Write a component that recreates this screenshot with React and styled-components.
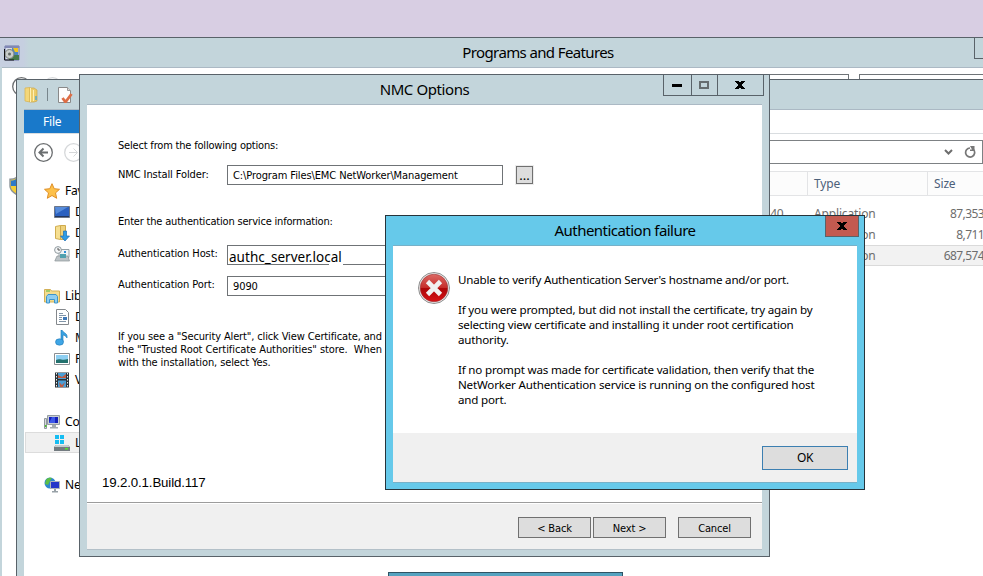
import React from "react";
import styled, { createGlobalStyle } from "styled-components";

const GlobalStyle = createGlobalStyle`
  * { box-sizing: border-box; }
  body { margin: 0; overflow: hidden; }
  svg { display: block; flex: none; }
`;

const ui = `"Segoe UI", "Noto Sans", "Open Sans", sans-serif`;
const tahoma = `Tahoma, "DejaVu Sans Condensed", "DejaVu Sans", sans-serif`;

const Desktop = styled.main`
  position: relative;
  width: 983px;
  height: 576px;
  overflow: hidden;
  background: #d8cee3;
  font: 12px/15px ${ui};
  color: #000;
`;

const Win = styled.section`
  position: absolute;
  left: ${(p) => p.$x}px;
  top: ${(p) => p.$y}px;
  width: ${(p) => p.$w}px;
  height: ${(p) => p.$h}px;
  display: flex;
  flex-direction: column;
  background: ${(p) => (p.$active ? "#66c9ea" : "#c3d5db")};
  border: 1px solid ${(p) => (p.$active ? "#27343b" : "#596269")};
  padding: 0 7px 6px;
`;

const TitleBar = styled.header`
  position: relative;
  flex: none;
  height: 29px;
  display: flex;
  align-items: center;
  justify-content: ${(p) => (p.$start ? "flex-start" : "center")};
`;

const Title = styled.h1`
  margin: 0;
  padding: 0 ${(p) => p.$shift || 0}px 2px 0;
  font: 400 15px/20px ${ui};
  letter-spacing: ${(p) => p.$ls}px;
  white-space: nowrap;
`;

const Client = styled.div`
  flex: 1;
  min-height: 0;
  display: flex;
  flex-direction: column;
  background: #fff;
  border-top: 1px solid ${(p) => (p.$active ? "#77b1c8" : "#abb9c4")};
  border-bottom: 1px solid ${(p) => (p.$active ? "#77b1c8" : "#b3c0c8")};
`;

const Captions = styled.div`
  position: absolute;
  right: ${(p) => p.$right}px;
  top: 0;
  height: 21px;
  display: flex;
  border: 1px solid #596269;
  border-top: 0;
`;

const CaptionButton = styled.button`
  width: ${(p) => p.$w}px;
  display: flex;
  align-items: center;
  justify-content: center;
  padding: 0 1px 0 0;
  border: 0;
  background: ${(p) => (p.$red ? "#c35a50" : "transparent")};
  & + & { border-left: 1px solid #596269; }
`;

/* Programs and Features */
const SystemIcon = styled.div`
  position: absolute;
  left: -2px;
  top: 0;
  width: 29px;
  height: 29px;
  padding: 7px 0 0 4px;
  background: linear-gradient(90deg, #c6cfe0 0, #c6cfe0 80%, #c3d5db);
`;

const BackNav = styled.div`
  display: flex;
  align-items: flex-start;
  padding: 6px 0 0 10px;
  height: 116px;
`;

const NavPair = styled.div`
  display: flex;
  gap: ${(p) => p.$gap}px;
  padding-top: ${(p) => p.$top}px;
`;

const SearchFields = styled.div`
  display: flex;
  gap: 10px;
  margin-left: 537px;
`;

const Field = styled.div`
  width: ${(p) => p.$w}px;
  height: 24px;
  border: 1px solid #6f7478;
`;

const ShieldSlot = styled.div`
  padding: 0 0 0 7px;
  margin-top: -7px;
`;

/* Explorer */
const QuickAccess = styled.div`
  display: flex;
  align-items: center;
  gap: 9px;
`;

const Separator = styled.i`
  width: 1px;
  height: 13px;
  background: #78868c;
`;

const Ribbon = styled.nav`
  flex: none;
  height: 24px;
  border-bottom: 1px solid #d9dde0;
`;

const FileTab = styled.div`
  width: 60px;
  height: 23px;
  background: #1979ca;
  color: #fff;
  font-size: 12px;
  line-height: 24px;
  letter-spacing: -0.2px;
  padding-left: 19px;
`;

const AddressRow = styled.div`
  flex: none;
  display: flex;
  height: 37px;
  padding: 6px 25px 0 10px;
`;

const Address = styled.div`
  flex: 1;
  height: 24px;
  margin-left: 60px;
  display: flex;
  align-items: center;
  justify-content: flex-end;
  gap: 11px;
  padding-right: 6px;
  border: 1px solid #7d8184;
`;

const Panes = styled.div`
  flex: 1;
  display: flex;
`;

const Tree = styled.div`
  width: 180px;
  padding-top: 9px;
`;

const Group = styled.div`
  margin-bottom: 21px;
`;

const TreeItem = styled.div`
  height: 21px;
  display: flex;
  align-items: center;
  gap: 5px;
  margin-left: 1px;
  padding-left: ${(p) => (p.$child ? 28 : 18)}px;
  border: 1px solid ${(p) => (p.$selected ? "#dcdcdc" : "transparent")};
  background: ${(p) => (p.$selected ? "#f0f0f0" : "transparent")};
  white-space: nowrap;
  letter-spacing: -0.2px;
`;

const Files = styled.div`
  flex: 1;
  color: #6d6d6d;
`;

const FileGrid = styled.div`
  display: grid;
  grid-template-columns: 604px 120px 56px;
  height: ${(p) => (p.$head ? 25 : 21)}px;
  line-height: ${(p) => (p.$head ? 24 : 19)}px;
  color: ${(p) => (p.$head ? "#4c607a" : "inherit")};
  background: ${(p) => (p.$head ? "#fcfcfc" : p.$selected ? "#f2f2f2" : "transparent")};
  border: solid ${(p) => (p.$head ? "#e3e4e6" : p.$selected ? "#dadada" : "transparent")};
  border-width: 1px 0;
  margin-bottom: ${(p) => (p.$head ? 7 : 0)}px;
`;

const Cell = styled.span`
  padding: 0 ${(p) => (p.$end ? 0 : 6)}px;
  text-align: ${(p) => (p.$end ? "right" : "left")};
  border-right: ${(p) => (p.$end ? 0 : 1)}px solid ${(p) => (p.$rule ? "#e3e4e6" : "transparent")};
  letter-spacing: ${(p) => (p.$end ? -0.6 : -0.15)}px;
`;

const DateCell = styled(Cell)`
  text-align: right;
  padding-right: 24px;
  letter-spacing: -0.5px;
`;

/* NMC Options */
const Form = styled.div`
  flex: 1;
  display: flex;
  flex-direction: column;
  padding: 34px 0 0 31px;
  font: 11px/14px ${tahoma};
`;

const Label = styled.label`
  width: ${(p) => (p.$wide ? "auto" : "109px")};
  flex: none;
  white-space: pre;
  letter-spacing: ${(p) => (p.$wide ? -0.19 : -0.1)}px;
`;

const FormRow = styled.div`
  display: flex;
  height: 20px;
  margin-top: ${(p) => p.$mt}px;
  line-height: ${(p) => p.$lh || 20}px;
`;

const TextBox = styled.div`
  position: relative;
  width: 276px;
  height: 20px;
  padding: ${(p) => (p.$edited ? "2px 0 0 1px" : "1px 0 0 5px")};
  border: 1px solid #6f7376;
  white-space: pre;
  font: ${(p) => (p.$edited ? `13.5px/18px ${ui}` : `11px/17px ${tahoma}`)};
  letter-spacing: ${(p) => (p.$edited ? 0.05 : -0.1)}px;
`;

/* Patch over the field's lower edge, beneath the last letters typed */
const EdgePatch = styled.i`
  position: absolute;
  left: 101px;
  bottom: -1px;
  width: 14px;
  height: 1px;
  background: #fff;
`;

const Browse = styled.button`
  width: 17px;
  height: 18px;
  margin: 1px 0 0 13px;
  padding: 0;
  border: 1px solid #707070;
  outline: 1px solid #ececec;
  background: #dddddd;
  font: 13px/14px ${ui};
`;

const Note = styled.p`
  margin: 34px 0 0;
  line-height: 13px;
`;

const NoteLine = styled.span`
  display: block;
  white-space: pre;
  letter-spacing: ${(p) => p.$ls}px;
`;

const Version = styled.div`
  margin: auto 0 11px -16px;
  font: 13.3px/16px "Liberation Sans", Arial, sans-serif;
  letter-spacing: -0.15px;
`;

const WizardFooter = styled.footer`
  flex: none;
  display: flex;
  height: 47px;
  padding: 14px 0 0 431px;
  background: #f0f0f0;
  border-top: 1px solid #9c9c9c;
  box-shadow: inset 0 1px #fff;
`;

const WizardButton = styled.button`
  width: 73px;
  height: 21px;
  margin-right: ${(p) => p.$gap || 0}px;
  padding: 1px 0 0;
  border: 1px solid #707070;
  background: #dddddd;
  font: 11px/17px ${tahoma};
  letter-spacing: -0.15px;
  color: #000;
`;

/* Authentication failure */
const Message = styled.div`
  flex: 1;
  display: flex;
  gap: 8px;
  padding: 26px 0 0 25px;
`;

const Copy = styled.div`
  display: flex;
  flex-direction: column;
  gap: 15px;
  font-size: 11.6px;
  letter-spacing: -0.19px;
`;

const Paragraph = styled.p`
  margin: 0;
`;

const Line = styled.span`
  display: block;
  white-space: nowrap;
`;

const DialogFooter = styled.footer`
  flex: none;
  display: flex;
  justify-content: flex-end;
  height: 49px;
  padding: 13px 9px 0 0;
  background: #f0f0f0;
`;

const OkButton = styled.button`
  width: 86px;
  height: 24px;
  padding: 0;
  border: 1px solid #3c7fb1;
  background: #dddddd;
  font: 12px/20px ${ui};
  letter-spacing: -0.4px;
  color: #000;
`;

const HiddenWindow = styled.div`
  position: absolute;
  left: 388px;
  top: 572px;
  width: 235px;
  height: 10px;
  border: 1px solid #2f5364;
  background: #55a3c0;
`;

const CloseGlyph = () => (
  <svg width="10" height="8" viewBox="0 0 10 8">
    <path d="M0 0h4v1h2V0h4v1H9v1H8v1H7v2h1v1h1v1h1v1H6V7H4v1H0V7h1V6h1V5h1V3H2V2H1V1H0z" fill="#000" />
  </svg>
);

const NavCircle = ({ faint, flip }) => (
  <svg width="19" height="19" viewBox="0 0 19 19">
    <g fill="none" stroke={faint ? "#d6d8da" : "#6b6e70"} transform={flip ? "matrix(-1 0 0 1 19 0)" : undefined}>
      <circle cx="9.5" cy="9.5" r="8.8" strokeWidth="1.3" />
      <path d="M14 9.5H6M9.5 5.5l-4 4 4 4" strokeWidth={faint ? 1 : 2} />
    </g>
  </svg>
);

const icons = {
  programs: (
    <>
      <path d="M1 1h14v14H1z" fill="#d7ddea" stroke="#6f76a8" />
      <path d="M1 1h14v2H1z" fill="#8188b5" />
      <path d="M8 3h6v7H8z" fill="#4c87c6" />
      <path d="M9 3h5v4h-3z" fill="#f3c51d" />
      <path d="M5 10h10v5H5z" fill="#477b4b" />
      <circle cx="5.5" cy="9" r="4.5" fill="#c8ccca" stroke="#777d78" />
      <circle cx="5.5" cy="9" r="1.5" fill="#646a66" />
      <path d="M.5 4v11H10" fill="none" stroke="#111" />
    </>
  ),
  folder: (
    <>
      <path d="M1 1l5-.5V15l-5-1z" fill="#f4d779" stroke="#d8b14c" strokeWidth=".7" />
      <path d="M6 1h4l3 2v11l-3 1H6z" fill="#eccc6a" stroke="#cda645" strokeWidth=".7" />
      <path d="M6.500 1v14M9.500 3v11" stroke="#fff0b4" />
      <path d="M12 9v4" stroke="#4aa5db" strokeWidth="1.4" />
    </>
  ),
  page: (
    <>
      <path d="M1.500.5h9l3 3v12h-12z" fill="#fdfdfd" stroke="#898989" />
      <path d="M10.500.5v3h3" fill="#ddd" stroke="#999" />
      <path d="M5.500 11l3 4 6-8" fill="none" stroke="#dd6d45" strokeWidth="2.8" />
    </>
  ),
  star: <path d="M8 .7l2.200 5 5.300.6-4 3.600 1.200 5.400L8 12.500l-4.700 2.800 1.200-5.400-4-3.600 5.300-.6z" fill="#fdc14a" stroke="#df8e26" />,
  desktop: (
    <>
      <path d="M.5 2.500h15v11H.5z" fill="#2b61c0" stroke="#6d7788" />
      <path d="M1 3h13L2 10z" fill="#6ea3e8" opacity=".65" />
      <path d="M1 12.500h14" stroke="#23365c" />
    </>
  ),
  downloads: (
    <>
      <path d="M1.500 1.500l5-1v14l-5-1z" fill="#f6df91" stroke="#d0ad50" />
      <path d="M6.500.5h5v14h-5z" fill="#eed17a" stroke="#cfaa4c" />
      <path d="M9.500 6h3v5h3L11 16l-4.500-5h3z" fill="#2d9be5" stroke="#1c6fb4" strokeWidth=".7" />
    </>
  ),
  recent: (
    <>
      <path d="M5 3.500h10v8H5z" fill="#eef3f6" stroke="#96a0a6" />
      <path d="M3 10h11l1.500 5H.8z" fill="#bcc3c7" stroke="#8a9297" strokeWidth=".7" />
      <path d="M6 8h6v4H6z" fill="#4fa0ae" />
      <path d="M10 5h2v2h-2z" fill="#2f8fd8" />
      <circle cx="4" cy="4" r="3.400" fill="#f4f6f7" stroke="#909a9f" />
      <path d="M4 2v2h2" fill="none" stroke="#555" />
    </>
  ),
  libraries: (
    <>
      <path d="M.5 14V1.500h6l1 1.500h8v11z" fill="#f5dd8e" stroke="#d2b057" />
      <path d="M2 3h4" stroke="#55b83c" />
      <path d="M2.500 15V8.500l1.500-2h8l1.500 2V15h-3v-3.500h-5V15z" fill="#8dcdf0" stroke="#3e94c8" />
    </>
  ),
  documents: (
    <>
      <path d="M2.500.5h9l3 3v12h-12z" fill="#fff" stroke="#84888c" />
      <path d="M5 4.500h4M5 6.500h7M5 8.500h3M5 10.500h3M5 12.500h7" stroke="#8195a8" />
      <path d="M9 8h4v3H9z" fill="#3f79b8" />
    </>
  ),
  music: (
    <>
      <path d="M8 0c1 3 6 3 5 8-1-2-3-3-4-3v7H7V0z" fill="#39a2e2" stroke="#1e78b7" strokeWidth=".6" />
      <ellipse cx="5.500" cy="12" rx="4" ry="3.200" fill="#3fa6e6" stroke="#1e78b7" strokeWidth=".6" />
    </>
  ),
  pictures: (
    <>
      <path d="M.5 2.500h15v11H.5z" fill="#fff" stroke="#8a8e92" />
      <path d="M2 4h12v8H2z" fill="#8ecff2" />
      <path d="M2 9c4-2 6 1 12-1v4H2z" fill="#23716e" />
    </>
  ),
  videos: (
    <>
      <path d="M1 .5h14v15H1z" fill="#2d3338" />
      <path d="M4 1h8v6H4zM4 8.500h8v6.500H4z" fill="#4a9ed6" />
      <path d="M4 3l4 2 4-3v4H4zM5 10l3 3 3-3-2 5H6z" fill="#bd5b43" />
      <path d="M2.500 1v15M13.500 1v15" stroke="#e9eef0" strokeDasharray="1.500 1.500" />
    </>
  ),
  computer: (
    <>
      <path d="M3.500 1.500h12v9h-12z" fill="#c9ced2" stroke="#959da3" />
      <path d="M5 3h9v6H5z" fill="#1420b9" />
      <path d="M8 3h3v6H5z" fill="#3d58e8" />
      <path d="M8 11h4v2H8zM6 13h8v1.500H6z" fill="#a3abb0" />
      <path d="M.5 4.500h2v10h-2z" fill="#d6dadc" stroke="#90989d" />
      <path d="M1 11h1.500v2H1z" fill="#4cc02e" />
    </>
  ),
  disk: (
    <>
      <path d="M1 0h4v4H1zM6 0h4v4H6zM1 5h4v4H1zM6 5h4v4H6z" fill="#16bdf2" />
      <path d="M2 10h12l2 2v4H0v-4z" fill="#737b80" />
      <path d="M2 10h12l2 2H0z" fill="#c5cccf" />
      <path d="M11 13h3v1.500h-3z" fill="#54e02f" />
    </>
  ),
  network: (
    <>
      <circle cx="6" cy="6" r="5.500" fill="#2d87cf" />
      <path d="M2 3c2-3 5-2 6-2L6 4 4 8 1 7zM7 5l4-1v3H7z" fill="#5cbf45" />
      <path d="M6.500 4.500h9v7h-9z" fill="#2436c9" stroke="#adb5bb" />
      <path d="M10 12h2v2h2v1.500H8V14h2z" fill="#98a1a7" />
    </>
  ),
};

const Icon = ({ name, w = 16, h = 16 }) => (
  <svg width={w} height={h} viewBox={`0 0 ${w} ${h}`}>{icons[name]}</svg>
);

const tree = [
  [["star", "Favorites"], ["desktop", "Desktop"], ["downloads", "Downloads"], ["recent", "Recent places"]],
  [["libraries", "Libraries"], ["documents", "Documents"], ["music", "Music"], ["pictures", "Pictures"], ["videos", "Videos"]],
  [["computer", "Computer"], ["disk", "Local Disk (C:)", true]],
  [["network", "Network"]],
];

const files = [["40", "Application", "87,353"], ["", "Application", "8,711"], ["", "Application", "687,574", true]];

const ProgramsWindow = () => (
  <Win $x={-6} $y={37} $w={1100} $h={560}>
    <TitleBar>
      <SystemIcon><Icon name="programs" /></SystemIcon>
      <Title $shift={12} $ls={-0.62}>Programs and Features</Title>
      <Captions $right={70}><CaptionButton $w={40} /></Captions>
    </TitleBar>
    <Client>
      <BackNav>
        <NavPair $gap={12} $top={3}><NavCircle /><NavCircle faint flip /></NavPair>
        <SearchFields><Field $w={250} /><Field $w={180} /></SearchFields>
      </BackNav>
      <ShieldSlot>
        <svg width="14" height="18" viewBox="0 0 14 18">
          <path d="M7 .7c2 1.500 4 1.500 6 1.500v7c0 4-3 6-6 8-3-2-6-4-6-8v-7c2 0 4 0 6-1.500z" fill="#f6ce35" stroke="#8c9499" strokeWidth="1.400" />
          <path d="M7 2v7H2V3.500c2 0 3.500-.5 5-1.500zM7 9h5c0 3-2 5-5 6.500z" fill="#2e7ac8" />
        </svg>
      </ShieldSlot>
    </Client>
  </Win>
);

const ExplorerWindow = () => (
  <Win $x={16} $y={79} $w={1000} $h={520}>
    <TitleBar $start>
      <QuickAccess>
        <Icon name="folder" w={14} /><Separator /><Icon name="page" />
      </QuickAccess>
    </TitleBar>
    <Client>
      <Ribbon><FileTab>File</FileTab></Ribbon>
      <AddressRow>
        <NavPair $gap={11} $top={3}><NavCircle /><NavCircle faint flip /></NavPair>
        <Address>
          <svg width="9" height="7" viewBox="0 0 9 7"><path d="M1 1l3.500 3.500L8 1" fill="none" stroke="#6d6d6d" strokeWidth="2" /></svg>
          <svg width="12" height="12" viewBox="0 0 12 12">
            <path d="M9.500 3.500A4.500 4.500 0 1 1 6 2" fill="none" stroke="#777" strokeWidth="1.700" />
            <path d="M6 0h4.500v5H6V3.500h2z" fill="#777" />
          </svg>
        </Address>
      </AddressRow>
      <Panes>
        <Tree>
          {tree.map((group) => (
            <Group key={group[0][1]}>
              {group.map(([icon, label, selected], i) => (
                <TreeItem key={label} $child={i > 0} $selected={selected}><Icon name={icon} />{label}</TreeItem>
              ))}
            </Group>
          ))}
        </Tree>
        <Files>
          <FileGrid $head><Cell $rule /><Cell $rule>Type</Cell><Cell>Size</Cell></FileGrid>
          {files.map(([date, type, size, selected]) => (
            <FileGrid key={size} $selected={selected}>
              <DateCell>{date}</DateCell><Cell>{type}</Cell><Cell $end>{size}</Cell>
            </FileGrid>
          ))}
        </Files>
      </Panes>
    </Client>
  </Win>
);

const OptionsWindow = () => (
  <Win $x={79} $y={74} $w={691} $h={483}>
    <TitleBar>
      <Title $ls={-0.4}>NMC Options</Title>
      <Captions $right={-2}>
        <CaptionButton $w={27}><svg width="10" height="3"><path d="M0 0h10v3H0z" /></svg></CaptionButton>
        <CaptionButton $w={26}><svg width="10" height="8"><path d="M1 1h8v6H1z" fill="none" stroke="#666c6f" strokeWidth="2" /></svg></CaptionButton>
        <CaptionButton $w={46}><CloseGlyph /></CaptionButton>
      </Captions>
    </TitleBar>
    <Client>
      <Form>
        <Label $wide>Select from the following options:</Label>
        <FormRow $mt={12}>
          <Label>NMC Install Folder:</Label>
          <TextBox>C:\Program Files\EMC NetWorker\Management</TextBox>
          <Browse>...</Browse>
        </FormRow>
        <FormRow $mt={27}><Label $wide>Enter the authentication service information:</Label></FormRow>
        <FormRow $mt={13} $lh={18}>
          <Label>Authentication Host:</Label>
          <TextBox $edited>authc_server.local<EdgePatch /></TextBox>
        </FormRow>
        <FormRow $mt={11} $lh={18}>
          <Label>Authentication Port:</Label>
          <TextBox>9090</TextBox>
        </FormRow>
        <Note>
          <NoteLine $ls={-0.13}>{'If you see a "Security Alert", click View Certificate, and install the certificate'}</NoteLine>
          <NoteLine $ls={-0.07}>{'the "Trusted Root Certificate Authorities" store.  When prompted'}</NoteLine>
          <NoteLine $ls={-0.1}>with the installation, select Yes.</NoteLine>
        </Note>
        <Version>19.2.0.1.Build.117</Version>
      </Form>
      <WizardFooter>
        <WizardButton $gap={2}>&lt; Back</WizardButton>
        <WizardButton $gap={12}>Next &gt;</WizardButton>
        <WizardButton>Cancel</WizardButton>
      </WizardFooter>
    </Client>
  </Win>
);

const FailureDialog = () => (
  <Win $active $x={385} $y={215} $w={480} $h={275}>
    <TitleBar>
      <Title $ls={-0.53}>Authentication failure</Title>
      <Captions $right={-2}><CaptionButton $red $w={32}><CloseGlyph /></CaptionButton></Captions>
    </TitleBar>
    <Client $active>
      <Message>
        <svg width="32" height="32" viewBox="0 0 32 32">
          <defs>
            <linearGradient id="red" x1="0" y1="0" x2="0" y2="1">
              <stop offset="0" stopColor="#dc6a66" /><stop offset=".48" stopColor="#c62e2b" />
              <stop offset=".52" stopColor="#ac0608" /><stop offset="1" stopColor="#d81216" />
            </linearGradient>
          </defs>
          <circle cx="16" cy="16" r="15.500" fill="#eee" stroke="#8d8d8d" />
          <circle cx="16" cy="16" r="13.800" fill="url(#red)" stroke="#9b3030" strokeWidth=".6" />
          <path d="M9.500 9.500l13 13M22.500 9.500l-13 13" stroke="#f1f1f1" strokeWidth="4.600" />
        </svg>
        <Copy>
          <Paragraph><Line>Unable to verify Authentication Server's hostname and/or port.</Line></Paragraph>
          <Paragraph>
            <Line>If you were prompted, but did not install the certificate, try again by</Line>
            <Line>selecting view certificate and installing it under root certification</Line>
            <Line>authority.</Line>
          </Paragraph>
          <Paragraph>
            <Line>If no prompt was made for certificate validation, then verify that the</Line>
            <Line>NetWorker Authentication service is running on the configured host</Line>
            <Line>and port.</Line>
          </Paragraph>
        </Copy>
      </Message>
      <DialogFooter><OkButton>OK</OkButton></DialogFooter>
    </Client>
  </Win>
);

export default function App() {
  return (
    <>
      <GlobalStyle />
      <Desktop>
        <ProgramsWindow />
        <ExplorerWindow />
        <OptionsWindow />
        <HiddenWindow />
        <FailureDialog />
      </Desktop>
    </>
  );
}
